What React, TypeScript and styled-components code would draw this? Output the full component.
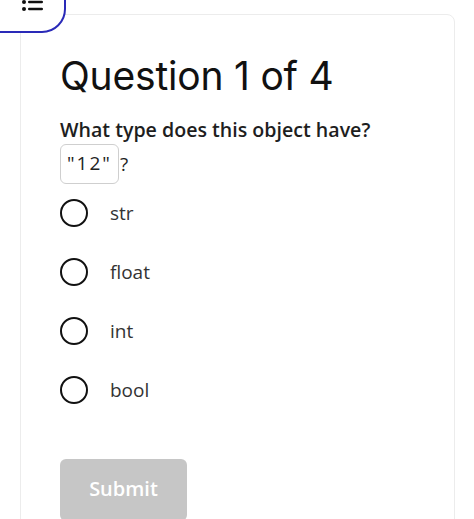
import React, { useState } from "react";
import styled, { createGlobalStyle } from "styled-components";

const GlobalStyle = createGlobalStyle`
  html, body {
    margin: 0;
    padding: 0;
    background: #fff;
    overflow: hidden;
  }
  body {
    font-family: "Open Sans", "Liberation Sans", sans-serif;
    color: #222;
  }
`;

const Page = styled.div`
  position: relative;
  width: 474px;
  height: 519px;
  overflow: hidden;
  padding: 14px 19px 0 20px;
  box-sizing: border-box;
`;

const MenuButton = styled.button`
  position: absolute;
  left: -30px;
  top: -40px;
  width: 96px;
  height: 73px;
  border: 2px solid #2a2ab8;
  border-radius: 0 0 24px 0;
  background: #fff;
  display: flex;
  align-items: flex-end;
  justify-content: flex-start;
  padding: 0 0 20px 50px;
  box-sizing: border-box;
`;

const Card = styled.div`
  border: 1px solid #ececec;
  border-radius: 8px;
  padding: 36px 40px 0 39px;
  height: 560px;
  box-sizing: border-box;
`;

const Title = styled.h1`
  font-family: Inter, "Liberation Sans", sans-serif;
  font-weight: 400;
  font-size: 39px;
  letter-spacing: -0.2px;
  color: #111;
  margin: 0 0 15px;
  line-height: 50px;
`;

const Prompt = styled.div`
  font-size: 19.6px;
  font-weight: 600;
  color: #1e1e1e;
  line-height: 28px;
`;

const PromptLine = styled.div`
  display: flex;
  align-items: center;
  gap: 1px;
  margin-top: 0;
  font-size: 19px;
  font-weight: 400;
`;

const Code = styled.span`
  display: inline-block;
  border: 1px solid #cfcfcf;
  border-radius: 6px;
  padding: 4px 6px 5px 6px;
  font-size: 19px;
  letter-spacing: 2px;
  line-height: 29px;
  color: #222;
`;

const Options = styled.div`
  display: flex;
  flex-direction: column;
  gap: 31px;
  margin-top: 15px;
`;

const Option = styled.label`
  display: flex;
  align-items: center;
  gap: 22px;
  cursor: pointer;
  font-size: 19px;
  line-height: 28px;
  color: #333;
  height: 28px;
`;

const Radio = styled.span<{ $checked: boolean }>`
  flex: none;
  width: 28px;
  height: 28px;
  border: 2px solid #111;
  border-radius: 50%;
  box-sizing: border-box;
  display: flex;
  align-items: center;
  justify-content: center;
  &::after {
    content: "";
    width: 14px;
    height: 14px;
    border-radius: 50%;
    background: ${(p) => (p.$checked ? "#111" : "transparent")};
  }
`;

const Submit = styled.button<{ $disabled: boolean }>`
  display: block;
  margin-top: 55px;
  width: 127px;
  height: 62px;
  border: none;
  border-radius: 6px;
  background: ${(p) => (p.$disabled ? "#c6c6c6" : "#2a2ab8")};
  color: #fff;
  font-family: "Open Sans", "Liberation Sans", sans-serif;
  font-size: 20px;
  font-weight: 600;
  padding: 0 0 4px;
`;

const ListIcon = () => (
  <svg width="22" height="18" viewBox="0 0 22 18">
    <circle cx="2" cy="2" r="2" fill="#111" />
    <circle cx="2" cy="9" r="2" fill="#111" />
    <circle cx="2" cy="16" r="2" fill="#111" />
    <rect x="6" y="0.8" width="15" height="2.4" rx="1.2" fill="#111" />
    <rect x="6" y="7.8" width="15" height="2.4" rx="1.2" fill="#111" />
    <rect x="6" y="14.8" width="15" height="2.4" rx="1.2" fill="#111" />
  </svg>
);

const choices = ["str", "float", "int", "bool"];

export default function App() {
  const [selected, setSelected] = useState<string | null>(null);

  return (
    <>
      <GlobalStyle />
      <Page>
        <Card>
          <Title>Question 1 of 4</Title>
          <Prompt>
            What type does this object have?
            <PromptLine>
              <Code>"12"</Code>?
            </PromptLine>
          </Prompt>
          <Options>
            {choices.map((c) => (
              <Option key={c} onClick={() => setSelected(c)}>
                <Radio $checked={selected === c} />
                {c}
              </Option>
            ))}
          </Options>
          <Submit $disabled={selected === null}>Submit</Submit>
        </Card>
        <MenuButton aria-label="Menu">
          <ListIcon />
        </MenuButton>
      </Page>
    </>
  );
}
